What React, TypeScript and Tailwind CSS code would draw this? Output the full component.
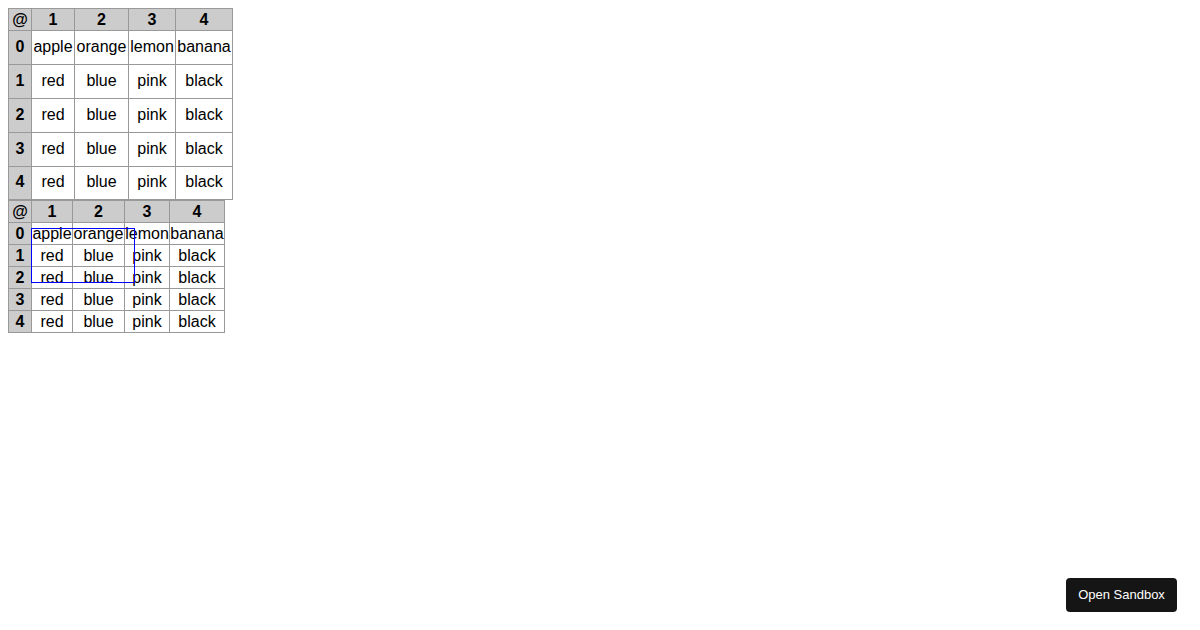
import React from "react";

const cols = ["1", "2", "3", "4"];
const rows = [
  ["apple", "orange", "lemon", "banana"],
  ["red", "blue", "pink", "black"],
  ["red", "blue", "pink", "black"],
  ["red", "blue", "pink", "black"],
  ["red", "blue", "pink", "black"],
];

function Grid({ colsClass, rowHeights, bodyPad }: { colsClass: string; rowHeights: string[]; bodyPad: string }) {
  return (
    <div className={`grid ${colsClass} gap-px bg-[#999999] p-px w-max`}>
      <div className={`bg-[#cccccc] font-bold flex items-center justify-center ${rowHeights[0]}`}>@</div>
      {cols.map((c) => (
        <div key={c} className={`bg-[#cccccc] font-bold flex items-center justify-center ${rowHeights[0]}`}>
          {c}
        </div>
      ))}
      {rows.map((r, i) => (
        <React.Fragment key={i}>
          <div className={`bg-[#cccccc] font-bold flex items-center justify-center ${bodyPad} ${rowHeights[i + 1]}`}>{i}</div>
          {r.map((v, j) => (
            <div key={j} className={`bg-white flex items-center justify-center whitespace-nowrap ${bodyPad} ${rowHeights[i + 1]}`}>
              {v}
            </div>
          ))}
        </React.Fragment>
      ))}
    </div>
  );
}

export default function App() {
  return (
    <div className="min-h-[630px] bg-white p-2 text-[16px] leading-[18px] text-black font-['Liberation_Sans',Arial,sans-serif]">
      <Grid
        colsClass="grid-cols-[22px_42px_53px_46px_56px]"
        rowHeights={["h-[21px]", "h-[33px]", "h-[33px]", "h-[33px]", "h-[33px]", "h-[32px]"]}
        bodyPad="pb-[2px]"
      />
      <div className="relative w-max">
        <Grid
          colsClass="grid-cols-[22px_40px_51px_44px_54px]"
          rowHeights={["h-[21px]", "h-[21px]", "h-[21px]", "h-[21px]", "h-[21px]", "h-[21px]"]}
          bodyPad=""
        />
        <div className="absolute left-[23px] top-[28px] w-[104px] h-[55px] border border-[#0000ff]" />
      </div>
      <button className="fixed right-[23px] bottom-[18px] h-[34px] w-[111px] rounded-[4px] bg-[#151515] text-[13px] text-white font-['Liberation_Sans',Arial,sans-serif]">
        Open Sandbox
      </button>
    </div>
  );
}
